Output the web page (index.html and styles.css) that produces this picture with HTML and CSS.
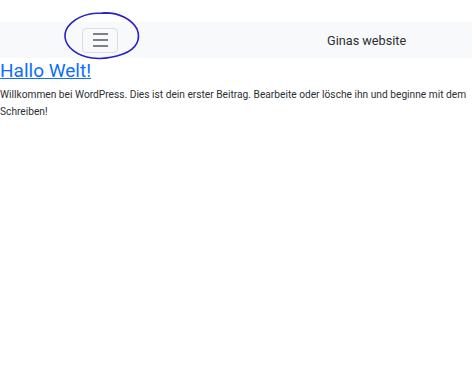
FILE: index.html
```html
<!DOCTYPE html>
<html lang="de">
<head>
<meta charset="utf-8">
<title>Ginas website</title>
<link rel="stylesheet" href="styles.css">
</head>
<body>
<nav class="navbar">
  <button class="toggler" type="button" aria-label="Menü">
    <span class="bar"></span>
    <span class="bar"></span>
    <span class="bar"></span>
  </button>
  <span class="brand">Ginas website</span>
  <svg class="circle" width="84" height="56" viewBox="0 0 84 56" aria-hidden="true">
    <path d="M42,4 C60,3 72,11 77,20 C81,30 77,40 63,45 C52,49 40,50 32,49 C18,47 6,39 5,28 C4,18 15,8 30,5 C36,4 40,4 47,4" fill="none" stroke="#2a20c4" stroke-width="1.6" stroke-linecap="round"/>
  </svg>
</nav>
<main class="post">
  <h2 class="title"><a href="#">Hallo Welt!</a></h2>
  <p class="text">Willkommen bei WordPress. Dies ist dein erster Beitrag. Bearbeite oder lösche ihn und beginne mit dem Schreiben!</p>
</main>
</body>
</html>
```
FILE: styles.css
```css
html, body {
  margin: 0;
  padding: 0;
  background: #fff;
  overflow: hidden;
}
body {
  font-family: Roboto, Lato, sans-serif;
  color: #212529;
  width: 474px;
}
.navbar {
  position: relative;
  margin-top: 22px;
  width: 472px;
  height: 36px;
  background: #f8f9fa;
  display: flex;
  align-items: center;
  padding-left: 82px;
  box-sizing: border-box;
}
.toggler {
  width: 36px;
  height: 25px;
  border: 1px solid #dcdddf;
  border-radius: 4px;
  background: transparent;
  padding: 0;
  display: flex;
  flex-direction: column;
  align-items: center;
  justify-content: center;
  gap: 4px;
}
.bar {
  display: block;
  width: 15px;
  height: 2px;
  background: #7d8185;
}
.brand {
  margin-left: 209px;
  font-size: 12.7px;
  color: #2b2f33;
}
.circle {
  position: absolute;
  left: 60px;
  top: -13px;
}
.post {
  width: 490px;
}
.title {
  margin: 0;
  font-size: 19px;
  font-weight: 400;
  line-height: 25px;
}
.title a {
  color: #0d6efd;
  text-decoration: underline;
}
.text {
  margin: 3px 0 0;
  font-size: 10.2px;
  line-height: 17px;
  color: #2b2f33;
}
```
